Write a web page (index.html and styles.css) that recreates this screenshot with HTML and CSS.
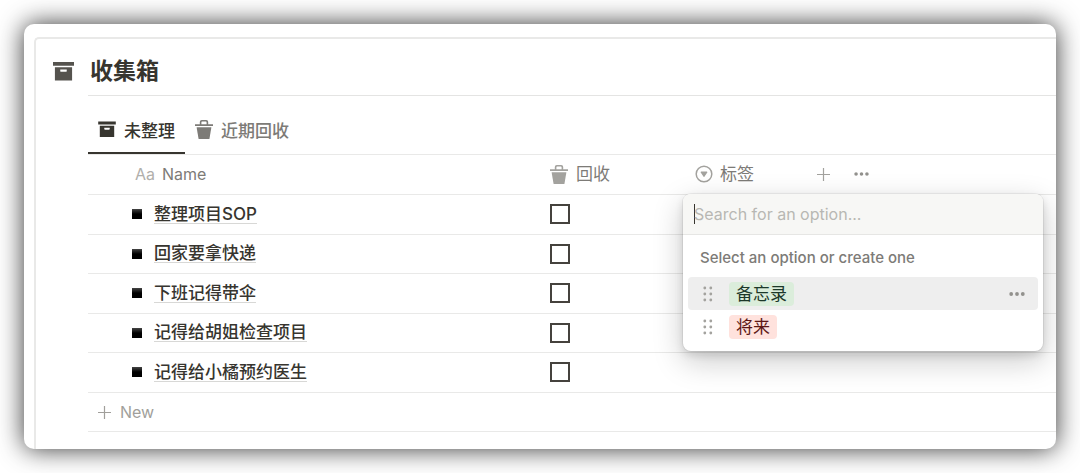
FILE: index.html
```
<!DOCTYPE html>
<html lang="zh-CN">

<head>
    <meta charset="UTF-8">
    <meta name="viewport" content="width=device-width, initial-scale=1.0">
    <title>收集箱</title>
    <link rel="stylesheet" href="styles.css">
</head>

<body>
    <!-- shared icons -->
    <svg class="sprite" width="0" height="0" aria-hidden="true">
        <symbol id="icon-archive" viewBox="0 0 22 20">
            <path d="M0 0.5h22v4H0z" />
            <path fill-rule="evenodd" d="M2 6h18v14H2zM7.6 8.3v1.6a1 1 0 0 0 1 1h4.8a1 1 0 0 0 1-1V8.3z" />
        </symbol>
        <symbol id="icon-trash" viewBox="0 0 18 19">
            <path fill-rule="evenodd" d="M4.8 4.2V2A2 2 0 0 1 6.8 0h4.4a2 2 0 0 1 2 2v2.2H18V6H0V4.2zM6.4 4.2h5.2V2.4a.8.8 0 0 0-.8-.8H7.2a.8.8 0 0 0-.8.8z" />
            <path d="M1.6 7.3h14.8L14.4 19H3.6z" />
        </symbol>
        <symbol id="icon-dots" viewBox="0 0 16 6">
            <circle cx="2.2" cy="3" r="1.9" />
            <circle cx="8" cy="3" r="1.9" />
            <circle cx="13.8" cy="3" r="1.9" />
        </symbol>
        <symbol id="icon-plus" viewBox="0 0 14 14">
            <path d="M7 0v14M0 7h14" fill="none" stroke="currentColor" stroke-width="1.3" />
        </symbol>
        <symbol id="icon-grip" viewBox="0 0 10 16">
            <circle cx="1.8" cy="2" r="1.4" />
            <circle cx="7.8" cy="2" r="1.4" />
            <circle cx="1.8" cy="8" r="1.4" />
            <circle cx="7.8" cy="8" r="1.4" />
            <circle cx="1.8" cy="14" r="1.4" />
            <circle cx="7.8" cy="14" r="1.4" />
        </symbol>
    </svg>

    <div class="window">
        <main class="panel">
            <header class="title">
                <svg class="title-icon"><use href="#icon-archive" /></svg>
                <h1>收集箱</h1>
            </header>

            <div class="database">
                <nav class="tabs">
                    <button type="button" class="tab active">
                        <svg class="tab-archive"><use href="#icon-archive" /></svg>未整理
                    </button>
                    <button type="button" class="tab">
                        <svg class="tab-trash"><use href="#icon-trash" /></svg>近期回收
                    </button>
                </nav>

                <table>
                    <colgroup>
                        <col class="col-name">
                        <col class="col-check">
                        <col class="col-tag">
                        <col>
                    </colgroup>
                    <thead>
                        <tr>
                            <th class="name"><span class="head"><span class="aa">Aa</span>Name</span></th>
                            <th><span class="head"><svg class="head-trash"><use href="#icon-trash" /></svg>回收</span></th>
                            <th class="tag-cell">
                                <span class="head">
                                    <svg class="head-select" viewBox="0 0 18 18">
                                        <circle cx="9" cy="9" r="7.8" fill="none" stroke="currentColor" stroke-width="1.5" />
                                        <path d="M6.1 6.6h5.8a.5.5 0 0 1 .4.8l-2.9 4.4a.5.5 0 0 1-.8 0L5.7 7.4a.5.5 0 0 1 .4-.8z" />
                                    </svg>标签
                                </span>
                            </th>
                            <th>
                                <span class="actions">
                                    <button type="button" aria-label="Add property"><svg class="plus"><use href="#icon-plus" /></svg></button>
                                    <button type="button" aria-label="More"><svg class="dots"><use href="#icon-dots" /></svg></button>
                                </span>
                            </th>
                        </tr>
                    </thead>
                    <tbody>
                        <tr>
                            <td class="name"><span class="page"><i class="square"></i><a href="#">整理项目SOP</a></span></td>
                            <td><input type="checkbox" aria-label="回收 整理项目SOP"></td>
                            <td class="tag-cell">
                                <div class="menu">
                                    <input type="text" class="search" placeholder="Search for an option..." aria-label="Search for an option">
                                    <p class="hint">Select an option or create one</p>
                                    <ul class="options">
                                        <li class="option selected">
                                            <svg class="grip"><use href="#icon-grip" /></svg>
                                            <span class="tag green">备忘录</span>
                                            <button type="button" class="more" aria-label="Edit option"><svg class="menu-dots"><use href="#icon-dots" /></svg></button>
                                        </li>
                                        <li class="option">
                                            <svg class="grip"><use href="#icon-grip" /></svg>
                                            <span class="tag red">将来</span>
                                        </li>
                                    </ul>
                                </div>
                            </td>
                            <td></td>
                        </tr>
                        <tr>
                            <td class="name"><span class="page"><i class="square"></i><a href="#">回家要拿快递</a></span></td>
                            <td><input type="checkbox" aria-label="回收 回家要拿快递"></td>
                            <td></td>
                            <td></td>
                        </tr>
                        <tr>
                            <td class="name"><span class="page"><i class="square"></i><a href="#">下班记得带伞</a></span></td>
                            <td><input type="checkbox" aria-label="回收 下班记得带伞"></td>
                            <td></td>
                            <td></td>
                        </tr>
                        <tr>
                            <td class="name"><span class="page"><i class="square"></i><a href="#">记得给胡姐检查项目</a></span></td>
                            <td><input type="checkbox" aria-label="回收 记得给胡姐检查项目"></td>
                            <td></td>
                            <td></td>
                        </tr>
                        <tr>
                            <td class="name"><span class="page"><i class="square"></i><a href="#">记得给小橘预约医生</a></span></td>
                            <td><input type="checkbox" aria-label="回收 记得给小橘预约医生"></td>
                            <td></td>
                            <td></td>
                        </tr>
                    </tbody>
                </table>
                <button type="button" class="new-row"><svg class="plus"><use href="#icon-plus" /></svg>New</button>
            </div>
        </main>
    </div>
</body>

</html>
```
FILE: styles.css
```
* {
    box-sizing: border-box;
}

body {
    margin: 0;
    padding: 24px;
    background: #fff;
    color: #37352f;
    font-family: Inter, "Noto Sans CJK SC", sans-serif;
    font-size: 16px;
}

svg {
    display: block;
    flex: none;
    fill: currentColor;
}

button {
    padding: 0;
    border: none;
    background: none;
    color: inherit;
    font: inherit;
    cursor: pointer;
}

.sprite {
    position: absolute;
}

.window {
    padding: 13px 0 0 10px;
    overflow: hidden;
    border-radius: 10px;
    background: #fff;
    box-shadow: 0 0 26px rgba(0, 0, 0, 0.8);
}

.panel {
    padding: 0 0 17px 17px;
    border-top: 2px solid #e9e9e8;
    border-left: 2px solid #e9e9e8;
    border-top-left-radius: 5px;
}

/* title */
.title {
    display: flex;
    align-items: center;
    height: 56px;
    padding-top: 8px;
}

.title-icon {
    width: 21px;
    height: 20px;
    margin-right: 16px;
    color: #55534e;
}

.title h1 {
    margin: 0;
    font-size: 23px;
    font-weight: 700;
    line-height: 32px;
}

.database {
    margin-left: 35px;
    border-top: 1px solid #e4e4e3;
}

/* tabs */
.tabs {
    display: flex;
    height: 59px;
    padding-top: 12px;
    border-bottom: 1px solid #e9e9e8;
}

.tab {
    display: flex;
    align-items: center;
    height: 46px;
    padding: 0 10px 2px;
    border-bottom: 2px solid transparent;
    color: #7d7b77;
    font-size: 17px;
    font-weight: 500;
}

.tab.active {
    border-bottom-color: #37352f;
    color: #37352f;
}

.tab-archive {
    width: 18px;
    height: 16px;
    margin-right: 8px;
}

.tab-trash {
    width: 18px;
    height: 19px;
    margin-right: 8px;
}

/* table */
table {
    width: 100%;
    border-collapse: separate;
    border-spacing: 0;
    table-layout: fixed;
}

.col-name {
    width: 453px;
}

.col-check {
    width: 142px;
}

.col-tag {
    width: 125px;
}

th,
td {
    height: 40px;
    padding: 0 9px 1px;
    border-bottom: 1px solid #e9e9e8;
    text-align: left;
    vertical-align: middle;
}

tbody tr:nth-child(even) td {
    height: 39px;
}

th {
    color: #7d7b77;
    font-size: 17px;
    font-weight: 400;
}

th.name {
    padding-left: 47px;
    font-size: 16px;
}

td.name {
    padding-left: 44px;
}

.tag-cell {
    position: relative;
    padding-left: 12px;
}

.head,
.actions,
.page {
    display: flex;
    align-items: center;
    line-height: 20px;
}

.head svg,
.actions {
    color: #a3a29e;
}

.aa {
    margin-right: 7px;
    color: #b0afab;
}

.head-trash {
    width: 18px;
    height: 19px;
    margin-right: 8px;
}

.head-select {
    width: 18px;
    height: 18px;
    margin-right: 7px;
}

.actions {
    gap: 24px;
}

.plus {
    width: 13px;
    height: 13px;
}

.dots {
    width: 15px;
    height: 6px;
    color: #92918d;
}

.square {
    width: 10px;
    height: 10px;
    margin-right: 12px;
    background: linear-gradient(#444 0%, #000 50%);
}

.page a {
    border-bottom: 1px solid #d8d8d6;
    color: inherit;
    font-size: 17px;
    font-weight: 500;
    line-height: 18px;
    text-decoration: none;
}

input[type="checkbox"] {
    display: block;
    width: 20px;
    height: 20px;
    margin: 0;
    border: 2px solid #45423d;
    background: #fff;
    appearance: none;
}

.new-row {
    display: flex;
    align-items: center;
    gap: 9px;
    width: 100%;
    height: 39px;
    padding-left: 10px;
    border-bottom: 1px solid #e9e9e8;
    color: #a19f9b;
}

/* option menu, opens over the tag column */
.menu {
    position: absolute;
    top: -1px;
    left: 0;
    z-index: 1;
    width: 360px;
    padding-bottom: 8px;
    overflow: hidden;
    border-radius: 8px;
    background: #fff;
    box-shadow: 0 0 0 1px rgba(15, 15, 15, 0.06), 0 4px 8px rgba(15, 15, 15, 0.12), 0 10px 30px rgba(15, 15, 15, 0.22);
}

/* the gradient is the text caret */
.search {
    display: block;
    width: 100%;
    height: 41px;
    padding: 0 11px;
    border: none;
    border-bottom: 1px solid #e6e6e4;
    outline: none;
    background: #f7f7f5 linear-gradient(#37352f, #37352f) 11px center / 1px 20px no-repeat;
    color: #37352f;
    font: inherit;
}

.search::placeholder {
    color: #b8b7b3;
}

.hint {
    margin: 0;
    padding: 14px 17px 10px;
    color: #7d7b77;
    font-size: 15px;
    font-weight: 500;
    line-height: 18px;
}

.options {
    margin: 0;
    padding: 0 5px;
    list-style: none;
}

.option {
    display: flex;
    align-items: center;
    height: 33px;
    padding: 0 12px 0 15px;
    border-radius: 4px;
}

.option.selected {
    background: #eee;
}

.grip {
    width: 10px;
    height: 16px;
    margin-right: 16px;
    color: #a3a29e;
}

.tag {
    height: 24px;
    padding: 0 7px;
    border-radius: 4px;
    font-size: 17px;
    line-height: 24px;
}

.green {
    background: #dbeddb;
    color: #1c3829;
}

.red {
    background: #ffe2dd;
    color: #5d1715;
}

.more {
    margin-left: auto;
    color: #92918d;
}

.menu-dots {
    width: 18px;
    height: 6px;
}
```
